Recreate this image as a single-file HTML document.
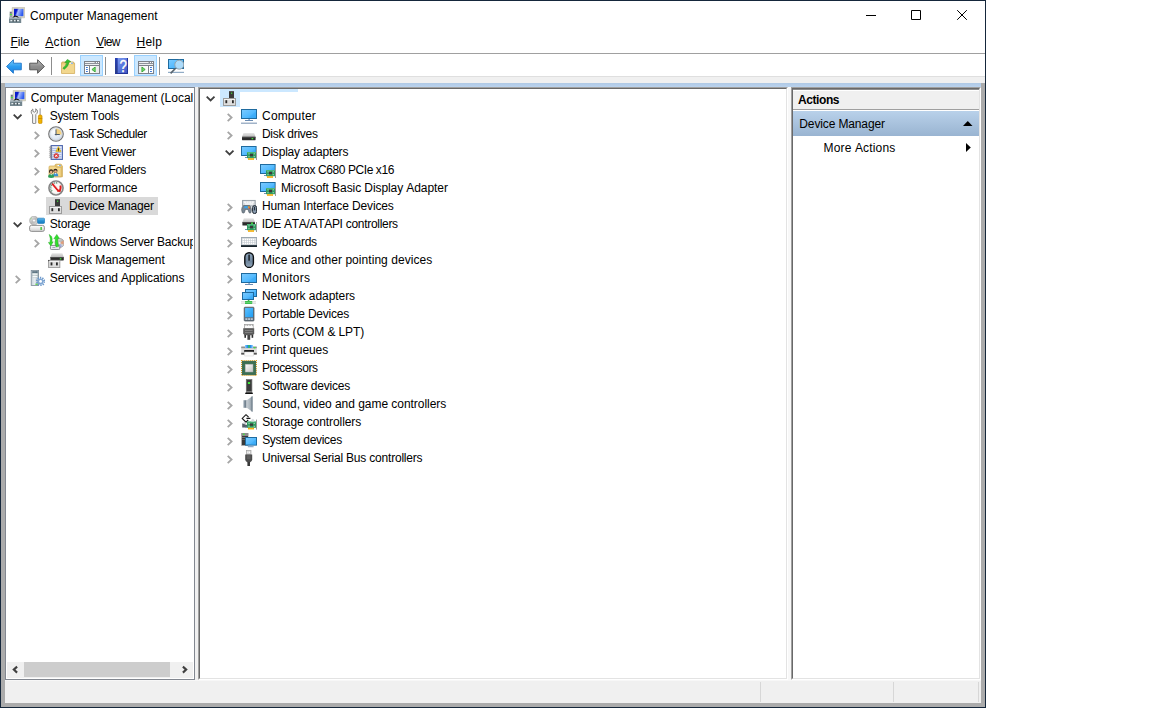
<!DOCTYPE html>
<html><head><meta charset="utf-8"><title>Computer Management</title>
<style>
html,body{margin:0;padding:0;background:#fff}
body{width:1152px;height:708px;position:relative;overflow:hidden;font:12px/18px "Liberation Sans",sans-serif;color:#000}
div,svg.i,.t{position:absolute}
.t{white-space:nowrap;height:18px;font-kerning:none}
u{text-decoration:underline;text-underline-offset:1px}
</style></head><body>
<svg width="0" height="0" style="position:absolute"><defs>
<linearGradient id="gScr" x1="0" y1="0" x2="1" y2="1"><stop offset="0" stop-color="#7dcbff"/><stop offset=".55" stop-color="#55bbff"/><stop offset="1" stop-color="#33a6f5"/></linearGradient>
<linearGradient id="gScr2" x1="0" y1="0" x2="1" y2="1"><stop offset="0" stop-color="#5cc0ff"/><stop offset="1" stop-color="#1e9cf2"/></linearGradient>
<linearGradient id="gCm" x1="0" y1="0" x2="1" y2="0.3"><stop offset="0" stop-color="#0a1ccc"/><stop offset=".32" stop-color="#0a1ccc"/><stop offset=".5" stop-color="#a9bcfb"/><stop offset="1" stop-color="#2f5cf0"/></linearGradient>
<linearGradient id="gDrvTop" x1="0" y1="0" x2="0" y2="1"><stop offset="0" stop-color="#e6e6e6"/><stop offset="1" stop-color="#bdbdbd"/></linearGradient>
<radialGradient id="gClk" cx=".4" cy=".35" r=".8"><stop offset="0" stop-color="#ffffff"/><stop offset="1" stop-color="#c5d6ea"/></radialGradient>
<linearGradient id="gCd" x1="0" y1="0" x2="1" y2="1"><stop offset="0" stop-color="#f4f4f4"/><stop offset=".5" stop-color="#b8b8b8"/><stop offset="1" stop-color="#e6e6e6"/></linearGradient>
<linearGradient id="gBlu" x1="0" y1="0" x2="0" y2="1"><stop offset="0" stop-color="#6cbcec"/><stop offset=".5" stop-color="#2790d2"/><stop offset="1" stop-color="#1a7cbe"/></linearGradient>
<linearGradient id="gHdd" x1="0" y1="0" x2="0" y2="1"><stop offset="0" stop-color="#ffffff"/><stop offset="1" stop-color="#cfcfcf"/></linearGradient>
<linearGradient id="gSrv" x1="0" y1="0" x2="1" y2="0"><stop offset="0" stop-color="#c7d2da"/><stop offset=".5" stop-color="#e8eef2"/><stop offset="1" stop-color="#93a5b2"/></linearGradient>
<linearGradient id="gKbd" x1="0" y1="0" x2="0" y2="1"><stop offset="0" stop-color="#3c4c56"/><stop offset="1" stop-color="#10181e"/></linearGradient>
<linearGradient id="gMouse" x1="0" y1="0" x2="0" y2="1"><stop offset="0" stop-color="#8ea4ba"/><stop offset=".6" stop-color="#6f869d"/><stop offset="1" stop-color="#93a7ba"/></linearGradient>
<linearGradient id="gPaper" x1="0" y1="0" x2="1" y2="0"><stop offset="0" stop-color="#8fd0ff"/><stop offset=".3" stop-color="#2b8cf0"/><stop offset=".5" stop-color="#31c24a"/><stop offset=".7" stop-color="#2b8cf0"/><stop offset="1" stop-color="#9fd8ff"/></linearGradient>
<linearGradient id="gChip" x1="0" y1="0" x2="1" y2="1"><stop offset="0" stop-color="#ffffff"/><stop offset="1" stop-color="#c4c4c4"/></linearGradient>
<linearGradient id="gSpk1" x1="0" y1="0" x2="1" y2="0"><stop offset="0" stop-color="#9aa8b4"/><stop offset="1" stop-color="#5f6f7c"/></linearGradient>
<linearGradient id="gSpk2" x1="0" y1="0" x2="1" y2="0"><stop offset="0" stop-color="#c9d0d6"/><stop offset=".6" stop-color="#aab4bc"/><stop offset="1" stop-color="#7d8c98"/></linearGradient>
<linearGradient id="gBack" x1="0" y1="0" x2="0" y2="1"><stop offset="0" stop-color="#7fd0fb"/><stop offset=".5" stop-color="#2d9df0"/><stop offset="1" stop-color="#1a7fe0"/></linearGradient>
<linearGradient id="gFwd" x1="0" y1="0" x2="0" y2="1"><stop offset="0" stop-color="#bdbdbd"/><stop offset=".5" stop-color="#8e8e8e"/><stop offset="1" stop-color="#7c7c7c"/></linearGradient>
<linearGradient id="gHelp" x1="0" y1="0" x2="1" y2="1"><stop offset="0" stop-color="#86a2f2"/><stop offset=".5" stop-color="#5a78de"/><stop offset="1" stop-color="#3a52c0"/></linearGradient>
<linearGradient id="gHelpL" x1="0" y1="0" x2="0" y2="1"><stop offset="0" stop-color="#2740b4"/><stop offset="1" stop-color="#2a3a86"/></linearGradient>
<linearGradient id="gAct" x1="0" y1="0" x2="0" y2="1"><stop offset="0" stop-color="#b9d1ea"/><stop offset="1" stop-color="#99b4d1"/></linearGradient>
</defs></svg>
<div style="left:0px;top:0px;width:986px;height:708px;background:#fff;border:1px solid #15273b;box-sizing:border-box"></div>
<svg class="i" style="left:9px;top:7px" width="16" height="16" viewBox="0 0 16 16"><rect x="3.2" y="0.2" width="12.6" height="10.6" rx=".6" fill="#dcd9c6" stroke="#b9b6a3" stroke-width=".6"/><rect x="5" y="1.8" width="9.4" height="7.4" fill="url(#gCm)"/><rect x="0.6" y="4.6" width="2.6" height="5.8" fill="#9aa2a6"/><rect x="0.9" y="7" width="2" height="1.1" fill="#4be23a"/><rect x="1.2" y="5.2" width="1.2" height="1.2" fill="#556"/><path d="M3.8,11 Q6.6,7.2 9.6,11" fill="#f4f4f4" stroke="#161616" stroke-width="1.2"/><rect x="0" y="10.6" width="12.2" height="5.4" fill="#73868f"/><rect x="0" y="10.6" width="12.2" height="1.2" fill="#a9b6bd"/><rect x="1.4" y="13" width="2.2" height="1.2" fill="#e6ecef"/><rect x="4.6" y="13" width="2.2" height="1.2" fill="#e6ecef"/><rect x="7.8" y="13" width="2.2" height="1.2" fill="#e6ecef"/><rect x="3.6" y="12.6" width="1" height="2.2" fill="#3b474d"/><rect x="6.8" y="12.6" width="1" height="2.2" fill="#3b474d"/></svg>
<svg class="i" style="left:860px;top:5px" width="120" height="20" viewBox="0 0 120 20"><path d="M6,10.5 H16 M51.5,5.5 H60.5 V14.5 H51.5Z M97.2,5.2 L106.8,14.8 M106.8,5.2 L97.2,14.8" fill="none" stroke="#000" stroke-width="1"/></svg>
<div style="left:1px;top:53px;width:984px;height:1px;background:#a0a0a0;"></div>
<div style="left:1px;top:76px;width:984px;height:1px;background:#dfdfdf;"></div>
<div style="left:1px;top:77px;width:984px;height:6px;background:#f0f0f0;"></div>
<div style="left:80px;top:55px;width:23px;height:21px;background:#cce8ff;border:1px solid #99d1ff;box-sizing:border-box"></div>
<div style="left:134px;top:55px;width:23px;height:21px;background:#cce8ff;border:1px solid #99d1ff;box-sizing:border-box"></div>
<div style="left:51px;top:57px;width:1px;height:18px;background:#8d8d8d;"></div>
<div style="left:105px;top:57px;width:1px;height:18px;background:#8d8d8d;"></div>
<div style="left:159px;top:57px;width:1px;height:18px;background:#8d8d8d;"></div>
<svg class="i" style="left:6px;top:59px" width="16" height="16" viewBox="0 0 16 16"><path d="M0.6,7.5 L7.4,0.7 V4.2 H15.3 V10.8 H7.4 V14.3Z" fill="url(#gBack)" stroke="#1a73c9" stroke-width=".9" stroke-linejoin="round"/></svg>
<svg class="i" style="left:29px;top:59px" width="16" height="16" viewBox="0 0 16 16"><path d="M15.4,7.5 L8.6,0.7 V4.2 H0.7 V10.8 H8.6 V14.3Z" fill="url(#gFwd)" stroke="#585858" stroke-width="1" stroke-linejoin="round"/></svg>
<svg class="i" style="left:61px;top:59px" width="16" height="16" viewBox="0 0 16 16"><path d="M0.6,4 Q0.6,3 1.6,3 H12 Q13,3 13,4 V4.4 H13.6 V14.4 H0.6Z" fill="#ecca78" stroke="#caa350" stroke-width=".8"/><rect x="8.4" y="3.6" width="3.6" height="1.2" rx=".5" fill="#fff"/><rect x="10.2" y="3.7" width="1.6" height="1" fill="#3b8ff0"/><rect x="0.9" y="5.4" width="12.4" height="8.8" fill="#f2d78e"/><path d="M6.4,0.4 L9.8,2.6 L7.8,3.2 Q7.8,7 3.2,10.4 L1.8,9 Q5.6,6.2 5.6,3.4 L3.8,3.6Z" fill="#36c030" stroke="#22901f" stroke-width=".5"/></svg>
<svg class="i" style="left:84px;top:59px" width="16" height="16" viewBox="0 0 16 16"><rect x="0.5" y="2.5" width="15" height="12" fill="#fff" stroke="#7d8189" stroke-width="1"/><rect x="1" y="3" width="14" height="1" fill="#8e929a"/><rect x="1" y="3" width="9.6" height="1" fill="#eef0f2"/><rect x="12" y="3" width="1" height="1" fill="#fff"/><rect x="14" y="3" width="1" height="1" fill="#fff"/><rect x="1" y="4" width="14" height="1" fill="#8e929a"/><rect x="1" y="5" width="14" height="1" fill="#eceef0"/><rect x="1" y="6" width="14" height="1" fill="#7d8189"/><rect x="5" y="7" width="1" height="7" fill="#7d8189"/><g fill="#3b78d8"><rect x="2" y="8" width="1.8" height="1"/><rect x="2" y="10" width="1.8" height="1"/><rect x="2" y="12" width="1.8" height="1"/></g><rect x="6" y="7" width="9" height="7" fill="#fbfbfb"/><rect x="12" y="7" width="3" height="7" fill="#ececec"/><path d="M11.2,8 V13 L7.9,10.5Z" fill="#74dc6e" stroke="#2a9a28" stroke-width=".8"/></svg>
<svg class="i" style="left:115px;top:58px" width="16" height="16" viewBox="0 0 16 16"><rect x="0" y="0" width="13" height="16" fill="url(#gHelp)"/><rect x="0" y="0" width="2.7" height="16" fill="url(#gHelpL)"/><rect x="12" y="0" width="1" height="16" fill="#22349a"/><rect x="0" y="15" width="13" height="1" fill="#22349a"/><text transform="translate(8.1,13.7) scale(.82,1)" font-family="Liberation Sans, sans-serif" font-weight="400" font-size="16" fill="#8a98c8" text-anchor="middle" x=".6" y=".5">?</text><text transform="translate(8.1,13.7) scale(.82,1)" font-family="Liberation Sans, sans-serif" font-weight="400" font-size="16" fill="#fff" stroke="#fff" stroke-width=".3" text-anchor="middle">?</text></svg>
<svg class="i" style="left:138px;top:59px" width="16" height="16" viewBox="0 0 16 16"><rect x="0.5" y="2.5" width="15" height="12" fill="#fff" stroke="#7d8189" stroke-width="1"/><rect x="1" y="3" width="14" height="1" fill="#8e929a"/><rect x="1" y="3" width="9.6" height="1" fill="#eef0f2"/><rect x="12" y="3" width="1" height="1" fill="#fff"/><rect x="14" y="3" width="1" height="1" fill="#fff"/><rect x="1" y="4" width="14" height="1" fill="#8e929a"/><rect x="1" y="5" width="14" height="1" fill="#eceef0"/><rect x="1" y="6" width="14" height="1" fill="#7d8189"/><rect x="10" y="7" width="1" height="7" fill="#7d8189"/><g fill="#3b78d8"><rect x="12" y="8" width="1.9" height="1"/><rect x="12" y="10" width="1.9" height="1"/><rect x="12" y="12" width="1.9" height="1"/></g><rect x="1" y="7" width="9" height="7" fill="#fbfbfb"/><rect x="1" y="7" width="2.4" height="7" fill="#f2f2f2"/><path d="M3.9,8 V13 L7.2,10.5Z" fill="#74dc6e" stroke="#2a9a28" stroke-width=".8"/></svg>
<svg class="i" style="left:168px;top:59px" width="16" height="16" viewBox="0 0 16 16"><rect x="0.5" y="0.5" width="15" height="9" fill="url(#gScr)" stroke="#1f6b9f" stroke-width="1"/><rect x="0" y="12.8" width="16" height="1.1" fill="#86a3c0"/><circle cx="11.3" cy="5.7" r="4.5" fill="#b4defb" fill-opacity=".92" stroke="#97a3ab" stroke-width="1"/><path d="M7.6,9.2 L2.6,14.4" stroke="#59656f" stroke-width="1.6"/></svg>
<div style="left:1px;top:83px;width:984px;height:624px;background:#ababab;"></div>
<div style="left:5px;top:83px;width:976px;height:4px;background:linear-gradient(#afc9e5,#bad3ee);"></div>
<div style="left:5px;top:87px;width:976px;height:616px;background:#f0f0f0;"></div>
<div style="left:5px;top:680px;width:976px;height:1px;background:#f7f7f7;"></div>
<div style="left:760px;top:682px;width:1px;height:20px;background:#d7d7d7;"></div>
<div style="left:893px;top:682px;width:1px;height:20px;background:#d7d7d7;"></div>
<div style="left:978px;top:682px;width:1px;height:20px;background:#d7d7d7;"></div>
<div style="left:5px;top:87px;width:190px;height:593px;background:#fff;border:1px solid #828790;box-sizing:border-box"></div>
<div style="left:7px;top:662px;width:186px;height:16px;background:#f0f0f0;"></div>
<div style="left:24px;top:662px;width:146px;height:15px;background:#cdcdcd;"></div>
<svg class="i" style="left:7px;top:662px" width="17" height="16" viewBox="0 0 17 16"><path d="M10.1,4.6 L6.8,7.6 L10.1,10.6" fill="none" stroke="#404040" stroke-width="2.1"/></svg>
<svg class="i" style="left:176px;top:662px" width="17" height="16" viewBox="0 0 17 16"><path d="M6.9,4.6 L10.2,7.6 L6.9,10.6" fill="none" stroke="#404040" stroke-width="2.1"/></svg>
<div style="left:46px;top:197px;width:112px;height:18px;background:#d9d9d9;"></div>
<svg class="i" style="left:10px;top:90px" width="16" height="16" viewBox="0 0 16 16"><rect x="3.2" y="0.2" width="12.6" height="10.6" rx=".6" fill="#dcd9c6" stroke="#b9b6a3" stroke-width=".6"/><rect x="5" y="1.8" width="9.4" height="7.4" fill="url(#gCm)"/><rect x="0.6" y="4.6" width="2.6" height="5.8" fill="#9aa2a6"/><rect x="0.9" y="7" width="2" height="1.1" fill="#4be23a"/><rect x="1.2" y="5.2" width="1.2" height="1.2" fill="#556"/><path d="M3.8,11 Q6.6,7.2 9.6,11" fill="#f4f4f4" stroke="#161616" stroke-width="1.2"/><rect x="0" y="10.6" width="12.2" height="5.4" fill="#73868f"/><rect x="0" y="10.6" width="12.2" height="1.2" fill="#a9b6bd"/><rect x="1.4" y="13" width="2.2" height="1.2" fill="#e6ecef"/><rect x="4.6" y="13" width="2.2" height="1.2" fill="#e6ecef"/><rect x="7.8" y="13" width="2.2" height="1.2" fill="#e6ecef"/><rect x="3.6" y="12.6" width="1" height="2.2" fill="#3b474d"/><rect x="6.8" y="12.6" width="1" height="2.2" fill="#3b474d"/></svg>
<svg class="i" style="left:29px;top:108px" width="16" height="16" viewBox="0 0 16 16"><path d="M3.6,15.2 V6.8 Q1.9,5.6 2.2,3.4 Q2.5,1.8 3.8,1 L3.9,3.4 L5.4,4.2 L6.9,3.2 L6.7,0.8 Q8.6,1.6 8.5,3.8 Q8.3,5.6 6.8,6.6 V15.2 Q5.2,16 3.6,15.2Z" fill="#f6f6f6" stroke="#868686" stroke-width="1"/><rect x="10.6" y="0.3" width="1" height="7.2" fill="#8e8e8e"/><rect x="9.4" y="7" width="3.6" height="8.6" rx="1.3" fill="#f2b300" stroke="#c48a00" stroke-width=".7"/><rect x="9.2" y="10" width="4" height="1" fill="#c99000"/></svg>
<svg class="i" style="left:13px;top:113px" width="10" height="7" viewBox="0 0 10 7"><path d="M0.7,1.6 L4.6,5.4 L8.5,1.6" fill="none" stroke="#404040" stroke-width="1.8"/></svg>
<svg class="i" style="left:48px;top:126px" width="16" height="16" viewBox="0 0 16 16"><circle cx="8" cy="8" r="7.2" fill="url(#gClk)" stroke="#747474" stroke-width="1.3"/><circle cx="8" cy="8" r="6.2" fill="none" stroke="#cfd3d8" stroke-width=".9"/><path d="M8,8.4 V2.6 A5.6,5.6 0 0 1 13.6,8.4Z" fill="#f3d07e"/><path d="M8,3.4 V9.4 M6.8,8.5 H11.8" fill="none" stroke="#4d5b69" stroke-width="1"/></svg>
<svg class="i" style="left:34px;top:131px" width="7" height="10" viewBox="0 0 7 10"><path d="M0.7,0.8 L4.6,4.5 L0.7,8.2" fill="none" stroke="#a6a6a6" stroke-width="1.8"/></svg>
<svg class="i" style="left:48px;top:144px" width="16" height="16" viewBox="0 0 16 16"><rect x="3.2" y="1.6" width="11.2" height="13.8" fill="#e3e9f8" stroke="#4d66ad" stroke-width="1.1"/><g stroke="#9fb2e3" stroke-width=".8"><path d="M4,4.5H13.5M4,6.5H13.5M4,8.5H13.5M4,10.5H13.5M4,12.5H13.5M4,14H13.5"/></g><g fill="none" stroke="#7a7a7a" stroke-width=".7"><ellipse cx="2.7" cy="3.2" rx="1.2" ry=".6"/><ellipse cx="2.7" cy="5.2" rx="1.2" ry=".6"/><ellipse cx="2.7" cy="7.2" rx="1.2" ry=".6"/><ellipse cx="2.7" cy="9.2" rx="1.2" ry=".6"/><ellipse cx="2.7" cy="11.2" rx="1.2" ry=".6"/><ellipse cx="2.7" cy="13.2" rx="1.2" ry=".6"/></g><path d="M10.4,2.6 L13,7.6 H7.8Z" fill="#f5c518" stroke="#c9a000" stroke-width=".5"/><rect x="10" y="4.2" width=".9" height="2" fill="#222"/><rect x="10" y="6.5" width=".9" height=".7" fill="#222"/><circle cx="8.3" cy="11.8" r="2.4" fill="#e23b3b" stroke="#b81c1c" stroke-width=".5"/><path d="M7.3,10.8 L9.3,12.8 M9.3,10.8 L7.3,12.8" stroke="#fff" stroke-width="1"/></svg>
<svg class="i" style="left:34px;top:149px" width="7" height="10" viewBox="0 0 7 10"><path d="M0.7,0.8 L4.6,4.5 L0.7,8.2" fill="none" stroke="#a6a6a6" stroke-width="1.8"/></svg>
<svg class="i" style="left:48px;top:162px" width="16" height="16" viewBox="0 0 16 16"><g transform="translate(0,1.6)"><path d="M7,1.8 Q7,0.6 8.2,0.6 H12.6 Q13.6,0.6 13.8,1.8 L14.4,2.4 V13.2 H7Z" fill="#e9c772" stroke="#c9a24a" stroke-width=".7"/><rect x="9.4" y="1.4" width="3.4" height="1.2" rx=".5" fill="#fff"/><rect x="11.2" y="1.5" width="1.5" height="1" fill="#3b8ff0"/><path d="M1,3.4 Q1,2.4 2,2.4 H7.4 L8.4,3.6 H13.2 V13.2 H1Z" fill="#f3d78c" stroke="#d0aa55" stroke-width=".7"/></g><circle cx="7.4" cy="8.8" r="2.1" fill="#33261c"/><circle cx="7.5" cy="9.5" r="1.3" fill="#e8b088"/><path d="M5,14.2 Q5,11 7.6,11 Q10.2,11 10.2,14.2Z" fill="#3a90d2"/><path d="M6.9,11.1 L7.6,12.5 L8.3,11.1Z" fill="#fff"/><circle cx="3.1" cy="9.4" r="2.1" fill="#33261c"/><circle cx="3.2" cy="10.1" r="1.3" fill="#e8b088"/><path d="M0.1,15.2 Q0.1,11.9 3.2,11.9 Q6.2,11.9 6.2,15.2 Q3.2,16.6 0.1,15.2Z" fill="#2b9d5b"/><path d="M2.5,12 L3.2,13.5 L3.9,12Z" fill="#fff"/></svg>
<svg class="i" style="left:34px;top:167px" width="7" height="10" viewBox="0 0 7 10"><path d="M0.7,0.8 L4.6,4.5 L0.7,8.2" fill="none" stroke="#a6a6a6" stroke-width="1.8"/></svg>
<svg class="i" style="left:48px;top:180px" width="16" height="16" viewBox="0 0 16 16"><circle cx="8" cy="8" r="7" fill="#faf9f5" stroke="#828282" stroke-width="1.7"/><circle cx="8" cy="8" r="5.9" fill="none" stroke="#dcdcdc" stroke-width=".6"/><path d="M4,11.2 A5,5 0 0 1 9.8,3.3" fill="none" stroke="#4d8a6c" stroke-width="1.4" stroke-dasharray="1 .9"/><path d="M12.4,5.6 Q13.2,8.6 11.8,11 L9.2,10.8" fill="none" stroke="#e01b1b" stroke-width="2"/><path d="M4.3,3.6 L10,10.4" stroke="#e01b1b" stroke-width="2.1"/><path d="M5.6,3.6 L10.4,9.4" stroke="#fff" stroke-width=".6"/></svg>
<svg class="i" style="left:34px;top:185px" width="7" height="10" viewBox="0 0 7 10"><path d="M0.7,0.8 L4.6,4.5 L0.7,8.2" fill="none" stroke="#a6a6a6" stroke-width="1.8"/></svg>
<svg class="i" style="left:48px;top:198px" width="16" height="16" viewBox="0 0 16 16"><rect x="7" y="1" width="5" height="7.5" fill="#3a3a3a"/><rect x="7" y="1" width="5" height="1" fill="#555"/><rect x="9" y="2.6" width="1.2" height="1.2" fill="#3fe23a"/><rect x="1.5" y="8.5" width="12" height="7" fill="#dedede" stroke="#9c9c9c"/><rect x="2" y="9" width="11" height="1" fill="#f2f2f2"/><rect x="3.4" y="10.2" width="1.8" height="3" fill="#2a2a2a"/><rect x="10" y="10.2" width="1.8" height="3" fill="#2a2a2a"/></svg>
<svg class="i" style="left:29px;top:216px" width="16" height="16" viewBox="0 0 16 16"><circle cx="5" cy="4.6" r="4.4" fill="url(#gCd)" stroke="#9a9a9a" stroke-width=".6"/><circle cx="5" cy="4.6" r="1.3" fill="#fff" stroke="#aaa" stroke-width=".4"/><path d="M1.4,3 L2.6,2" stroke="#7fd06a" stroke-width="1"/><rect x="8.6" y="2.2" width="7" height="5.2" rx="1" fill="url(#gBlu)" stroke="#1c7dbd" stroke-width=".7"/><rect x="0.6" y="9.4" width="14.8" height="6" rx="1.8" fill="url(#gHdd)" stroke="#888" stroke-width=".9"/><rect x="11.4" y="11" width="1.5" height="3" fill="#49c83a"/></svg>
<svg class="i" style="left:13px;top:221px" width="10" height="7" viewBox="0 0 10 7"><path d="M0.7,1.6 L4.6,5.4 L8.5,1.6" fill="none" stroke="#404040" stroke-width="1.8"/></svg>
<svg class="i" style="left:48px;top:234px" width="16" height="16" viewBox="0 0 16 16"><circle cx="11.6" cy="9" r="4.6" fill="url(#gCd)" stroke="#8a8a8a" stroke-width=".6"/><path d="M11.6,9 L15.4,6.6 L15.8,10.4Z" fill="#e8946a" opacity=".8"/><path d="M11.6,9 L14.4,12.4 L11,13.4Z" fill="#9aa8e8" opacity=".8"/><circle cx="11.6" cy="9" r="1" fill="#eee"/><rect x="2.4" y="11.4" width="9.4" height="4.2" rx="1.2" fill="#e8e8ee" stroke="#7a7a88" stroke-width=".9"/><rect x="4.4" y="13" width="3" height="1" fill="#aab"/><path d="M1.2,0.4 L3.6,2.4 Q4.8,5 3.8,8 L5.2,7.8 L2.8,12 L0.4,8.4 L2,8.4 Q3,5 1.2,0.4Z" fill="#2fe02a" stroke="#1d9a1d" stroke-width=".4"/><path d="M8.8,0.4 L11.4,4.4 L9.8,4.4 Q9.4,8 10.6,12.6 L8,13 Q6.8,8 7.4,4.6 L5.8,4.8Z" fill="#2fe02a" stroke="#1d9a1d" stroke-width=".4"/></svg>
<svg class="i" style="left:34px;top:239px" width="7" height="10" viewBox="0 0 7 10"><path d="M0.7,0.8 L4.6,4.5 L0.7,8.2" fill="none" stroke="#a6a6a6" stroke-width="1.8"/></svg>
<svg class="i" style="left:48px;top:252px" width="16" height="16" viewBox="0 0 16 16"><path d="M3.9,1.2 H14.3 L15.8,5.0 H2.4Z" fill="url(#gDrvTop)"/><rect x="2.4" y="5.0" width="13.4" height="3.4" rx=".6" fill="#2b2b2b"/><rect x="2.4" y="5.0" width="13.4" height=".8" fill="#555"/><rect x="11.8" y="6.2" width="1.6" height="1.3" fill="#3fe23a"/><rect x="0.6" y="8.4" width="11.2" height="7.2" fill="#dedede" stroke="#9c9c9c"/><rect x="1" y="8.9" width="10.4" height="1" fill="#f4f4f4"/><rect x="2.6" y="10.4" width="1.8" height="3" fill="#2a2a2a"/><rect x="8" y="10.4" width="1.8" height="3" fill="#2a2a2a"/><rect x="0.2" y="8" width="1.2" height="1.2" fill="#444"/></svg>
<svg class="i" style="left:29px;top:270px" width="16" height="16" viewBox="0 0 16 16"><rect x="2.2" y="0.4" width="7.4" height="15.2" fill="url(#gSrv)" stroke="#7b8b97" stroke-width=".8"/><rect x="3.2" y="1.4" width="5.4" height="1.3" fill="#2d4a5a"/><rect x="3.2" y="3.4" width="5.4" height="1.6" fill="#f4f8fa" stroke="#9aa" stroke-width=".3"/><rect x="3.2" y="5.8" width="5.4" height="1.6" fill="#f4f8fa" stroke="#9aa" stroke-width=".3"/><rect x="6.4" y="13.6" width="2.4" height="1.2" fill="#58d83a"/><circle cx="11.6" cy="11.4" r="3.7" fill="none" stroke="#6f9acb" stroke-width="2" stroke-dasharray="1.3 1.03"/><circle cx="11.6" cy="11.4" r="2.9" fill="#7fa6d4"/><circle cx="11.6" cy="11.4" r="1.4" fill="#fff"/></svg>
<svg class="i" style="left:15px;top:275px" width="7" height="10" viewBox="0 0 7 10"><path d="M0.7,0.8 L4.6,4.5 L0.7,8.2" fill="none" stroke="#a6a6a6" stroke-width="1.8"/></svg>
<div style="left:198px;top:87px;width:590px;height:593px;background:#fff;border-style:solid;border-width:1px;border-color:#a0a0a0 #fff #fff #a0a0a0;box-sizing:border-box"></div>
<div style="left:199px;top:88px;width:588px;height:591px;background:#fff;border-style:solid;border-width:1px;border-color:#696969 #e3e3e3 #e3e3e3 #696969;box-sizing:border-box"></div>
<div style="left:788px;top:87px;width:3px;height:593px;background:#f8f8f8;"></div>
<div style="left:220px;top:89px;width:78px;height:18px;background:#cce8ff;"></div>
<div style="left:240px;top:92px;width:60px;height:15px;background:#fff;"></div>
<svg class="i" style="left:222px;top:90px" width="16" height="16" viewBox="0 0 16 16"><rect x="7" y="1" width="5" height="7.5" fill="#3a3a3a"/><rect x="7" y="1" width="5" height="1" fill="#555"/><rect x="9" y="2.6" width="1.2" height="1.2" fill="#3fe23a"/><rect x="1.5" y="8.5" width="12" height="7" fill="#dedede" stroke="#9c9c9c"/><rect x="2" y="9" width="11" height="1" fill="#f2f2f2"/><rect x="3.4" y="10.2" width="1.8" height="3" fill="#2a2a2a"/><rect x="10" y="10.2" width="1.8" height="3" fill="#2a2a2a"/></svg>
<svg class="i" style="left:206px;top:95px" width="10" height="7" viewBox="0 0 10 7"><path d="M0.7,1.6 L4.6,5.4 L8.5,1.6" fill="none" stroke="#404040" stroke-width="1.8"/></svg>
<svg class="i" style="left:241px;top:108px" width="16" height="16" viewBox="0 0 16 16"><rect x="0.5" y="1.5" width="15" height="9" fill="url(#gScr)" stroke="#1f6b9f"/><path d="M7.2,10 L15,3.5 L15,10Z" fill="#38a9f5" opacity=".55"/><rect x="7.4" y="11" width="1.4" height="1" fill="#7d9cc0"/><rect x="4" y="12" width="8" height="1" fill="#6d8db3"/><rect x="0" y="14.6" width="16" height="1.2" fill="#8aa1bb"/></svg>
<svg class="i" style="left:227px;top:113px" width="7" height="10" viewBox="0 0 7 10"><path d="M0.7,0.8 L4.6,4.5 L0.7,8.2" fill="none" stroke="#a6a6a6" stroke-width="1.8"/></svg>
<svg class="i" style="left:241px;top:126px" width="16" height="16" viewBox="0 0 16 16"><path d="M2.5,7 H13.1 L14.6,10.8 H1Z" fill="url(#gDrvTop)"/><rect x="1" y="10.8" width="13.6" height="3.4" rx=".6" fill="#2b2b2b"/><rect x="1" y="10.8" width="13.6" height=".8" fill="#555"/><rect x="10.6" y="12" width="1.6" height="1.3" fill="#3fe23a"/><rect x="1.4" y="14.2" width="12.8" height=".7" fill="#cfcfcf"/></svg>
<svg class="i" style="left:227px;top:131px" width="7" height="10" viewBox="0 0 7 10"><path d="M0.7,0.8 L4.6,4.5 L0.7,8.2" fill="none" stroke="#a6a6a6" stroke-width="1.8"/></svg>
<svg class="i" style="left:241px;top:144px" width="16" height="16" viewBox="0 0 16 16"><rect x="0.5" y="2.5" width="14.6" height="9" fill="url(#gScr)" stroke="#1f6b9f"/><path d="M7.02,11 L14.6,4.5 L14.6,11Z" fill="#38a9f5" opacity=".55"/><rect x="6" y="8" width="9" height="6.2" fill="#2f9a5e"/><rect x="6" y="8" width="9" height="1" fill="#4cb77a"/><rect x="9" y="10" width="3" height="2.2" fill="#3a3a3a"/><rect x="7.5" y="9.3" width="1" height="1" fill="#cfe8d8"/><rect x="12.7" y="9.3" width="1" height="1" fill="#cfe8d8"/><rect x="7.5" y="12.2" width="1" height="1" fill="#cfe8d8"/><rect x="12.7" y="12.2" width="1" height="1" fill="#cfe8d8"/><rect x="7" y="14.2" width="6" height="1.6" fill="#f2a900"/><rect x="8.8" y="14.2" width=".5" height="1.6" fill="#f8d060"/><rect x="10.8" y="14.2" width=".5" height="1.6" fill="#f8d060"/><rect x="15" y="6" width="1" height="10" fill="#9a9a9a"/><rect x="4" y="13" width="2" height=".8" fill="#55779f"/></svg>
<svg class="i" style="left:225px;top:149px" width="10" height="7" viewBox="0 0 10 7"><path d="M0.7,1.6 L4.6,5.4 L8.5,1.6" fill="none" stroke="#404040" stroke-width="1.8"/></svg>
<svg class="i" style="left:260px;top:162px" width="16" height="16" viewBox="0 0 16 16"><rect x="0.5" y="2.5" width="14.6" height="9" fill="url(#gScr)" stroke="#1f6b9f"/><path d="M7.02,11 L14.6,4.5 L14.6,11Z" fill="#38a9f5" opacity=".55"/><rect x="6" y="8" width="9" height="6.2" fill="#2f9a5e"/><rect x="6" y="8" width="9" height="1" fill="#4cb77a"/><rect x="9" y="10" width="3" height="2.2" fill="#3a3a3a"/><rect x="7.5" y="9.3" width="1" height="1" fill="#cfe8d8"/><rect x="12.7" y="9.3" width="1" height="1" fill="#cfe8d8"/><rect x="7.5" y="12.2" width="1" height="1" fill="#cfe8d8"/><rect x="12.7" y="12.2" width="1" height="1" fill="#cfe8d8"/><rect x="7" y="14.2" width="6" height="1.6" fill="#f2a900"/><rect x="8.8" y="14.2" width=".5" height="1.6" fill="#f8d060"/><rect x="10.8" y="14.2" width=".5" height="1.6" fill="#f8d060"/><rect x="15" y="6" width="1" height="10" fill="#9a9a9a"/><rect x="4" y="13" width="2" height=".8" fill="#55779f"/></svg>
<svg class="i" style="left:260px;top:180px" width="16" height="16" viewBox="0 0 16 16"><rect x="0.5" y="2.5" width="14.6" height="9" fill="url(#gScr)" stroke="#1f6b9f"/><path d="M7.02,11 L14.6,4.5 L14.6,11Z" fill="#38a9f5" opacity=".55"/><rect x="6" y="8" width="9" height="6.2" fill="#2f9a5e"/><rect x="6" y="8" width="9" height="1" fill="#4cb77a"/><rect x="9" y="10" width="3" height="2.2" fill="#3a3a3a"/><rect x="7.5" y="9.3" width="1" height="1" fill="#cfe8d8"/><rect x="12.7" y="9.3" width="1" height="1" fill="#cfe8d8"/><rect x="7.5" y="12.2" width="1" height="1" fill="#cfe8d8"/><rect x="12.7" y="12.2" width="1" height="1" fill="#cfe8d8"/><rect x="7" y="14.2" width="6" height="1.6" fill="#f2a900"/><rect x="8.8" y="14.2" width=".5" height="1.6" fill="#f8d060"/><rect x="10.8" y="14.2" width=".5" height="1.6" fill="#f8d060"/><rect x="15" y="6" width="1" height="10" fill="#9a9a9a"/><rect x="4" y="13" width="2" height=".8" fill="#55779f"/></svg>
<svg class="i" style="left:241px;top:198px" width="16" height="16" viewBox="0 0 16 16"><rect x="1.6" y="2.4" width="12.6" height="5.6" fill="#d9dde1" stroke="#8c979f" stroke-width=".9"/><g fill="#fff"><rect x="3" y="3.6" width="2" height="1.1"/><rect x="5.6" y="3.6" width="2" height="1.1"/><rect x="8.2" y="3.6" width="2" height="1.1"/><rect x="10.8" y="3.6" width="2" height="1.1"/><rect x="4" y="5.4" width="8" height="1.1"/></g><path d="M2.6,7.6 H8.6 Q10.2,9 10.4,11.6 L10,14.6 Q9,15.6 8,14.6 L7,11.4 H4.4 L3.4,14.6 Q2.4,15.6 1.2,14.6 L0.6,11.6 Q0.8,9 2.6,7.6Z" fill="#7a8894" stroke="#4a5660" stroke-width=".6"/><rect x="3.4" y="8.2" width="3.2" height="2" fill="#35a4f2"/><circle cx="8" cy="9.2" r=".9" fill="#f2a020"/><circle cx="8.6" cy="10.2" r=".6" fill="#e03a2a"/><rect x="11.6" y="7.6" width="4" height="8" rx="2" fill="#8a9cb0" stroke="#1c2730" stroke-width="1"/><rect x="13.1" y="8.8" width="1" height="3.6" fill="#1c2730"/></svg>
<svg class="i" style="left:227px;top:203px" width="7" height="10" viewBox="0 0 7 10"><path d="M0.7,0.8 L4.6,4.5 L0.7,8.2" fill="none" stroke="#a6a6a6" stroke-width="1.8"/></svg>
<svg class="i" style="left:241px;top:216px" width="16" height="16" viewBox="0 0 16 16"><path d="M2.9,2.3 H12.5 L14.0,6.1 H1.4Z" fill="url(#gDrvTop)"/><rect x="1.4" y="6.1" width="12.6" height="3.4" rx=".6" fill="#2b2b2b"/><rect x="1.4" y="6.1" width="12.6" height=".8" fill="#555"/><rect x="10.0" y="7.3" width="1.6" height="1.3" fill="#3fe23a"/><rect x="6" y="8" width="9" height="6.2" fill="#2f9a5e"/><rect x="6" y="8" width="9" height="1" fill="#4cb77a"/><rect x="9" y="10" width="3" height="2.2" fill="#3a3a3a"/><rect x="7.5" y="9.3" width="1" height="1" fill="#cfe8d8"/><rect x="12.7" y="9.3" width="1" height="1" fill="#cfe8d8"/><rect x="7.5" y="12.2" width="1" height="1" fill="#cfe8d8"/><rect x="12.7" y="12.2" width="1" height="1" fill="#cfe8d8"/><rect x="7" y="14.2" width="6" height="1.6" fill="#f2a900"/><rect x="8.8" y="14.2" width=".5" height="1.6" fill="#f8d060"/><rect x="10.8" y="14.2" width=".5" height="1.6" fill="#f8d060"/><rect x="15" y="6" width="1" height="10" fill="#9a9a9a"/><rect x="4" y="13" width="2" height=".8" fill="#55779f"/><rect x="10.4" y="6.4" width="1.4" height="1.6" fill="#3fe23a"/></svg>
<svg class="i" style="left:227px;top:221px" width="7" height="10" viewBox="0 0 7 10"><path d="M0.7,0.8 L4.6,4.5 L0.7,8.2" fill="none" stroke="#a6a6a6" stroke-width="1.8"/></svg>
<svg class="i" style="left:241px;top:234px" width="16" height="16" viewBox="0 0 16 16"><rect x="0" y="3" width="16" height="8" fill="#d5dade"/><rect x="0" y="3" width="16" height="1" fill="#9ba7b0"/><rect x="0" y="3" width=".8" height="8" fill="#9ba7b0"/><rect x="15.2" y="3" width=".8" height="8" fill="#9ba7b0"/><g fill="#fff"><rect x="1.6" y="4.8" width="12.8" height="1.2"/><rect x="1.6" y="6.8" width="12.8" height="1.2"/><rect x="1.6" y="8.8" width="12.8" height="1.2"/></g><g fill="#c3cad0"><rect x="3.4" y="4.6" width=".6" height="5.6"/><rect x="5.4" y="4.6" width=".6" height="5.6"/><rect x="7.4" y="4.6" width=".6" height="5.6"/><rect x="9.4" y="4.6" width=".6" height="5.6"/><rect x="11.4" y="4.6" width=".6" height="5.6"/><rect x="13" y="4.6" width=".6" height="5.6"/></g><rect x="0" y="11" width="16" height="2" fill="url(#gKbd)"/></svg>
<svg class="i" style="left:227px;top:239px" width="7" height="10" viewBox="0 0 7 10"><path d="M0.7,0.8 L4.6,4.5 L0.7,8.2" fill="none" stroke="#a6a6a6" stroke-width="1.8"/></svg>
<svg class="i" style="left:241px;top:252px" width="16" height="16" viewBox="0 0 16 16"><rect x="3.8" y="0.7" width="8.6" height="14.8" rx="4.2" ry="4.6" fill="url(#gMouse)" stroke="#0c0f12" stroke-width="1.4"/><rect x="7.3" y="2.4" width="1.6" height="6.4" rx=".5" fill="#1f262d"/></svg>
<svg class="i" style="left:227px;top:257px" width="7" height="10" viewBox="0 0 7 10"><path d="M0.7,0.8 L4.6,4.5 L0.7,8.2" fill="none" stroke="#a6a6a6" stroke-width="1.8"/></svg>
<svg class="i" style="left:241px;top:270px" width="16" height="16" viewBox="0 0 16 16"><rect x="0.5" y="3.5" width="15" height="9" fill="url(#gScr)" stroke="#1f6b9f"/><path d="M7.2,12 L15,5.5 L15,12Z" fill="#38a9f5" opacity=".55"/><rect x="7.4" y="13" width="1.4" height="1" fill="#7d9cc0"/><rect x="4" y="14" width="8" height="1" fill="#6d8db3"/></svg>
<svg class="i" style="left:227px;top:275px" width="7" height="10" viewBox="0 0 7 10"><path d="M0.7,0.8 L4.6,4.5 L0.7,8.2" fill="none" stroke="#a6a6a6" stroke-width="1.8"/></svg>
<svg class="i" style="left:241px;top:288px" width="16" height="16" viewBox="0 0 16 16"><rect x="4.5" y="1.5" width="11" height="7" fill="url(#gScr)" stroke="#1f6b9f"/><path d="M9.4,8 L15,3.0 L15,8Z" fill="#38a9f5" opacity=".55"/><rect x="1.5" y="4.5" width="11" height="7" fill="url(#gScr)" stroke="#1f6b9f"/><path d="M6.4,11 L12,6.0 L12,11Z" fill="#38a9f5" opacity=".55"/><rect x="0" y="13.2" width="15" height="2.6" fill="#d9d9d9"/><rect x="0" y="14" width="15" height=".8" fill="#f0f0f0"/><rect x="6.8" y="12" width="1.6" height="1.4" fill="#37b24a"/><rect x="4" y="13" width="7.2" height="3" fill="#3fbf4f"/><rect x="4" y="14" width="7.2" height=".8" fill="#6fd67b"/></svg>
<svg class="i" style="left:227px;top:293px" width="7" height="10" viewBox="0 0 7 10"><path d="M0.7,0.8 L4.6,4.5 L0.7,8.2" fill="none" stroke="#a6a6a6" stroke-width="1.8"/></svg>
<svg class="i" style="left:241px;top:306px" width="16" height="16" viewBox="0 0 16 16"><rect x="3.2" y="1.2" width="9.8" height="13.8" rx=".8" fill="#66727f" stroke="#444e58" stroke-width=".7"/><rect x="4.1" y="2" width="8" height="9.2" fill="url(#gScr2)"/><g fill="#b9c6d3"><rect x="4.4" y="12.2" width="2" height="1.8"/><rect x="7.1" y="12.2" width="2" height="1.8"/><rect x="9.8" y="12.2" width="2" height="1.8"/></g></svg>
<svg class="i" style="left:227px;top:311px" width="7" height="10" viewBox="0 0 7 10"><path d="M0.7,0.8 L4.6,4.5 L0.7,8.2" fill="none" stroke="#a6a6a6" stroke-width="1.8"/></svg>
<svg class="i" style="left:241px;top:324px" width="16" height="16" viewBox="0 0 16 16"><rect x="3.4" y="0.4" width="8.8" height="4" fill="#fafafa" stroke="#9a9a9a" stroke-width=".7"/><g fill="#9a9a9a"><rect x="4.6" y=".4" width=".7" height="1.6"/><rect x="6.2" y=".4" width=".7" height="1.6"/><rect x="7.8" y=".4" width=".7" height="1.6"/><rect x="9.4" y=".4" width=".7" height="1.6"/><rect x="11" y=".4" width=".7" height="1.6"/></g><path d="M2.2,4.2 H13.2 V9.6 L12,11.2 H3.4 L2.2,9.6Z" fill="#5b5b5b"/><rect x="4" y="6" width="7.6" height=".8" fill="#8a8a8a"/><rect x="4" y="8" width="7.6" height=".8" fill="#8a8a8a"/><rect x="3.4" y="11" width="1.6" height="2.8" fill="#2e2e2e"/><rect x="10.6" y="11" width="1.6" height="2.8" fill="#2e2e2e"/><rect x="6.4" y="11" width="2.8" height="4.8" fill="#444"/></svg>
<svg class="i" style="left:227px;top:329px" width="7" height="10" viewBox="0 0 7 10"><path d="M0.7,0.8 L4.6,4.5 L0.7,8.2" fill="none" stroke="#a6a6a6" stroke-width="1.8"/></svg>
<svg class="i" style="left:241px;top:342px" width="16" height="16" viewBox="0 0 16 16"><rect x="4" y="3" width="8" height="3" fill="url(#gPaper)"/><rect x="0.2" y="4.6" width="15.6" height="8" rx="1" fill="#dcdcdc"/><rect x="0.2" y="4.6" width="15.6" height="1.6" fill="#8f8f8f"/><rect x="4" y="3.2" width="8" height="2.8" fill="url(#gPaper)"/><rect x="0.2" y="10.8" width="3.2" height="1.8" fill="#555"/><rect x="12.6" y="10.8" width="3.2" height="1.8" fill="#555"/><rect x="12.8" y="5" width="1.6" height="1.4" fill="#3fe23a"/><rect x="3.2" y="8" width="9.8" height="2.2" fill="#1f1f1f"/><rect x="3.8" y="10" width="8.6" height="4" fill="#fbfbfb" stroke="#cfcfcf" stroke-width=".5"/></svg>
<svg class="i" style="left:227px;top:347px" width="7" height="10" viewBox="0 0 7 10"><path d="M0.7,0.8 L4.6,4.5 L0.7,8.2" fill="none" stroke="#a6a6a6" stroke-width="1.8"/></svg>
<svg class="i" style="left:241px;top:360px" width="16" height="16" viewBox="0 0 16 16"><rect x="0.6" y="0.6" width="14.8" height="14.8" fill="none" stroke="#e2a11a" stroke-width="1.2" stroke-dasharray="1 1.03"/><rect x="1.2" y="1.2" width="13.6" height="13.6" fill="#3b6f53" stroke="#2a563e" stroke-width=".6"/><rect x="4.2" y="4.2" width="7.8" height="7.8" fill="url(#gChip)" stroke="#a8a8a8" stroke-width=".5"/></svg>
<svg class="i" style="left:227px;top:365px" width="7" height="10" viewBox="0 0 7 10"><path d="M0.7,0.8 L4.6,4.5 L0.7,8.2" fill="none" stroke="#a6a6a6" stroke-width="1.8"/></svg>
<svg class="i" style="left:241px;top:378px" width="16" height="16" viewBox="0 0 16 16"><rect x="5.3" y="1.6" width="5.6" height="11.8" fill="#3b3b3b" stroke="#6b6b6b" stroke-width=".7"/><rect x="6.9" y="4" width="2.2" height="2" fill="#3fe83a"/><path d="M4.8,14.2 H11.4 L12,16 H4Z" fill="#111"/></svg>
<svg class="i" style="left:227px;top:383px" width="7" height="10" viewBox="0 0 7 10"><path d="M0.7,0.8 L4.6,4.5 L0.7,8.2" fill="none" stroke="#a6a6a6" stroke-width="1.8"/></svg>
<svg class="i" style="left:241px;top:396px" width="16" height="16" viewBox="0 0 16 16"><rect x="2.4" y="4.2" width="3.2" height="7.6" fill="url(#gSpk1)"/><path d="M5.4,4.4 L11.4,0.3 V15.7 L5.4,11.6Z" fill="url(#gSpk2)"/><rect x="10.6" y="0.3" width=".9" height="15.4" fill="#6c7c88"/></svg>
<svg class="i" style="left:227px;top:401px" width="7" height="10" viewBox="0 0 7 10"><path d="M0.7,0.8 L4.6,4.5 L0.7,8.2" fill="none" stroke="#a6a6a6" stroke-width="1.8"/></svg>
<svg class="i" style="left:241px;top:414px" width="16" height="16" viewBox="0 0 16 16"><path d="M5,0.6 L1.2,4.4 L5,8.2 L7.2,6 M5,0.6 L7.6,3.2 M5.4,4.4 H9.4" fill="none" stroke="#1a1a1a" stroke-width="1.1"/><path d="M1.2,9.2 L6,11 V13.4 H1.2Z" fill="#555e66"/><path d="M1.2,9.2 L4,8 L6,11Z" fill="#c8ccd0"/><rect x="6" y="7.6" width="9" height="6.2" fill="#2f9a5e"/><rect x="6" y="7.6" width="9" height="1" fill="#4cb77a"/><rect x="9" y="9.6" width="3" height="2.2" fill="#3a3a3a"/><rect x="7.5" y="8.9" width="1" height="1" fill="#cfe8d8"/><rect x="12.7" y="8.9" width="1" height="1" fill="#cfe8d8"/><rect x="7.5" y="11.8" width="1" height="1" fill="#cfe8d8"/><rect x="12.7" y="11.8" width="1" height="1" fill="#cfe8d8"/><rect x="7" y="13.8" width="6" height="1.6" fill="#f2a900"/><rect x="8.8" y="13.8" width=".5" height="1.6" fill="#f8d060"/><rect x="10.8" y="13.8" width=".5" height="1.6" fill="#f8d060"/><rect x="15" y="5.6" width="1" height="10" fill="#9a9a9a"/><rect x="4" y="12.6" width="2" height=".8" fill="#55779f"/><path d="M10.2,6 L11.8,4.8 L13.4,6 V7.6 H10.2Z" fill="#d8dce0"/></svg>
<svg class="i" style="left:227px;top:419px" width="7" height="10" viewBox="0 0 7 10"><path d="M0.7,0.8 L4.6,4.5 L0.7,8.2" fill="none" stroke="#a6a6a6" stroke-width="1.8"/></svg>
<svg class="i" style="left:241px;top:432px" width="16" height="16" viewBox="0 0 16 16"><rect x="0.6" y="1" width="6.6" height="12" fill="#3a3a3a"/><rect x="0.6" y="1" width="6.6" height="3" fill="#8c8c8c"/><rect x="2" y="1.6" width="1.6" height="1.3" fill="#3fe83a"/><rect x="1" y="5" width="5.8" height=".9" fill="#7a7a7a"/><rect x="1" y="7" width="5.8" height=".9" fill="#666"/><rect x="0.2" y="13" width="7" height=".8" fill="#999"/><rect x="4.5" y="5.5" width="11" height="7.6" fill="url(#gScr)" stroke="#1f6b9f"/><path d="M9.4,12.6 L15,7.15 L15,12.6Z" fill="#38a9f5" opacity=".55"/><rect x="9.4" y="13.6" width="1.2" height=".8" fill="#7d9cc0"/><rect x="6.8" y="14.3" width="5.8" height=".9" fill="#6d8db3"/></svg>
<svg class="i" style="left:227px;top:437px" width="7" height="10" viewBox="0 0 7 10"><path d="M0.7,0.8 L4.6,4.5 L0.7,8.2" fill="none" stroke="#a6a6a6" stroke-width="1.8"/></svg>
<svg class="i" style="left:241px;top:450px" width="16" height="16" viewBox="0 0 16 16"><rect x="5.4" y="0.3" width="4.6" height="4.4" fill="#d6d6d6" stroke="#9c9c9c" stroke-width=".6"/><rect x="6.4" y="1.6" width="1" height="1.3" fill="#fff"/><rect x="8" y="1.6" width="1" height="1.3" fill="#fff"/><path d="M4.2,4.4 H11.2 V9.6 Q11.2,11.4 9.2,12.2 H6.2 Q4.2,11.4 4.2,9.6Z" fill="#4c4c4c"/><rect x="5.8" y="5.2" width="3.8" height="4" fill="#5e5e5e"/><rect x="6.4" y="12" width="2.6" height="4" fill="#3a3a3a"/></svg>
<svg class="i" style="left:227px;top:455px" width="7" height="10" viewBox="0 0 7 10"><path d="M0.7,0.8 L4.6,4.5 L0.7,8.2" fill="none" stroke="#a6a6a6" stroke-width="1.8"/></svg>
<div style="left:791px;top:87px;width:190px;height:593px;background:#fff;border-style:solid;border-width:1px;border-color:#a0a0a0 #fff #fff #a0a0a0;box-sizing:border-box"></div>
<div style="left:792px;top:88px;width:188px;height:591px;background:#fff;border-style:solid;border-width:1px;border-color:#696969 #e3e3e3 #e3e3e3 #696969;box-sizing:border-box"></div>
<div style="left:793px;top:89px;width:186px;height:1px;background:#8c8c8c;"></div>
<div style="left:793px;top:90px;width:186px;height:1px;background:#fff;"></div>
<div style="left:793px;top:91px;width:186px;height:18px;background:#f0f0f0;"></div>
<div style="left:793px;top:109px;width:186px;height:1px;background:#a0a0a0;"></div>
<div style="left:793px;top:110px;width:186px;height:1px;background:#fff;"></div>
<div style="left:793px;top:111px;width:186px;height:25px;background:linear-gradient(#b9d1ea,#99b4d1);"></div>
<svg class="i" style="left:963px;top:121px" width="10" height="5" viewBox="0 0 10 5"><path d="M0,5 L4.5,0.3 H5 L9.5,5Z" fill="#000"/></svg>
<svg class="i" style="left:966px;top:143px" width="5" height="10" viewBox="0 0 5 10"><path d="M0,0 L4.8,4.5 L0,9Z" fill="#000"/></svg>
<span class="t" style="left:29.99px;top:7px;letter-spacing:0.085px;">Computer Management</span>
<span class="t" style="left:10.52px;top:33px;letter-spacing:-0.106px;"><u>F</u>ile</span>
<span class="t" style="left:45.28px;top:33px;letter-spacing:0.33px;"><u>A</u>ction</span>
<span class="t" style="left:96.25px;top:33px;letter-spacing:-0.595px;"><u>V</u>iew</span>
<span class="t" style="left:136.62px;top:33px;letter-spacing:0.17px;"><u>H</u>elp</span>
<span class="t" style="left:30.79px;top:89px;letter-spacing:0.017px;width:162.21px;overflow:hidden;">Computer Management (Local</span>
<span class="t" style="left:49.66px;top:107px;letter-spacing:-0.282px;">System Tools</span>
<span class="t" style="left:69.23px;top:125px;letter-spacing:-0.416px;">Task Scheduler</span>
<span class="t" style="left:68.92px;top:143px;letter-spacing:-0.329px;">Event Viewer</span>
<span class="t" style="left:68.96px;top:161px;letter-spacing:-0.366px;">Shared Folders</span>
<span class="t" style="left:69.02px;top:179px;letter-spacing:-0.018px;">Performance</span>
<span class="t" style="left:68.92px;top:197px;letter-spacing:-0.176px;">Device Manager</span>
<span class="t" style="left:49.76px;top:215px;letter-spacing:-0.209px;">Storage</span>
<span class="t" style="left:69.25px;top:233px;letter-spacing:-0.193px;width:123.75px;overflow:hidden;">Windows Server Backup</span>
<span class="t" style="left:68.92px;top:251px;letter-spacing:-0.06px;">Disk Management</span>
<span class="t" style="left:49.76px;top:269px;letter-spacing:-0.114px;">Services and Applications</span>
<span class="t" style="left:262.09px;top:107px;letter-spacing:0.132px;">Computer</span>
<span class="t" style="left:261.92px;top:125px;letter-spacing:-0.266px;">Disk drives</span>
<span class="t" style="left:261.92px;top:143px;letter-spacing:-0.191px;">Display adapters</span>
<span class="t" style="left:280.92px;top:161px;letter-spacing:-0.42px;">Matrox C680 PCIe x16</span>
<span class="t" style="left:280.92px;top:179px;letter-spacing:-0.08px;">Microsoft Basic Display Adapter</span>
<span class="t" style="left:262.02px;top:197px;letter-spacing:-0.132px;">Human Interface Devices</span>
<span class="t" style="left:261.79px;top:215px;letter-spacing:-0.293px;">IDE ATA/ATAPI controllers</span>
<span class="t" style="left:261.92px;top:233px;letter-spacing:-0.269px;">Keyboards</span>
<span class="t" style="left:261.92px;top:251px;letter-spacing:0.052px;">Mice and other pointing devices</span>
<span class="t" style="left:261.92px;top:269px;letter-spacing:0.315px;">Monitors</span>
<span class="t" style="left:261.92px;top:287px;letter-spacing:-0.055px;">Network adapters</span>
<span class="t" style="left:261.92px;top:305px;letter-spacing:-0.226px;">Portable Devices</span>
<span class="t" style="left:261.92px;top:323px;letter-spacing:-0.105px;">Ports (COM &amp; LPT)</span>
<span class="t" style="left:261.92px;top:341px;letter-spacing:-0.105px;">Print queues</span>
<span class="t" style="left:261.92px;top:359px;letter-spacing:-0.444px;">Processors</span>
<span class="t" style="left:262.16px;top:377px;letter-spacing:-0.227px;">Software devices</span>
<span class="t" style="left:262.16px;top:395px;letter-spacing:-0.043px;">Sound, video and game controllers</span>
<span class="t" style="left:262.16px;top:413px;letter-spacing:-0.091px;">Storage controllers</span>
<span class="t" style="left:262.16px;top:431px;letter-spacing:-0.312px;">System devices</span>
<span class="t" style="left:261.97px;top:449px;letter-spacing:-0.196px;">Universal Serial Bus controllers</span>
<span class="t" style="left:797.9px;top:91px;letter-spacing:-0.402px;font-weight:700;">Actions</span>
<span class="t" style="left:799.32px;top:115px;letter-spacing:-0.13px;">Device Manager</span>
<span class="t" style="left:823.52px;top:139px;letter-spacing:0.154px;">More Actions</span>
</body></html>
